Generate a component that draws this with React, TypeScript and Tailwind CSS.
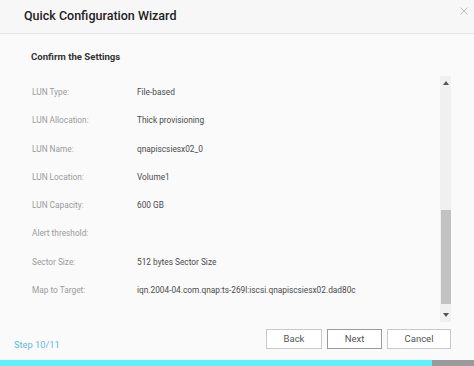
import React from "react";

const rows: [string, string][] = [
  ["LUN Type:", "File-based"],
  ["LUN Allocation:", "Thick provisioning"],
  ["LUN Name:", "qnapiscsiesx02_0"],
  ["LUN Location:", "Volume1"],
  ["LUN Capacity:", "600 GB"],
  ["Alert threshold:", ""],
  ["Sector Size:", "512 bytes Sector Size"],
  ["Map to Target:", "iqn.2004-04.com.qnap:ts-269l:iscsi.qnapiscsiesx02.dad80c"],
];

export default function App() {
  return (
    <div
      className="w-[474px] h-[366px] bg-[#fafafa] flex flex-col overflow-hidden"
      style={{ fontFamily: "Roboto, 'Noto Sans', sans-serif" }}
    >
      <div className="h-[34px] shrink-0 bg-[#f7f7f7] border-b border-[#e4e4e4] flex items-center pl-[24px] relative">
        <span className="text-[12.5px] font-medium text-[#222]">Quick Configuration Wizard</span>
        <svg className="absolute right-[6px] top-[7px]" width="8" height="8" viewBox="0 0 8 8">
          <path d="M0.5 0.5L7.5 7.5M7.5 0.5L0.5 7.5" stroke="#bdbdbd" strokeWidth="1" />
        </svg>
      </div>
      <div className="flex-1 flex flex-col">
        <div className="pl-[31px] pt-[16px] h-[42px] text-[9.6px] font-bold text-[#333]">Confirm the Settings</div>
        <div className="flex">
          <div className="flex-1 flex flex-col pt-[2px]">
            {rows.map(([l, v]) => (
              <div key={l} className="h-[28.3px] flex items-center text-[8.3px] pl-[32px]">
                <span className="w-[105px] text-[#9a9a9a]">{l}</span>
                <span className="text-[#4a4a4a] whitespace-nowrap">{v}</span>
              </div>
            ))}
          </div>
          <div className="w-[11px] mr-[23px] h-[246px] bg-[#f0f0f0] flex flex-col items-center">
            <svg width="6" height="4" viewBox="0 0 6 4" className="mt-[5px] shrink-0">
              <path d="M0 4L3 0L6 4Z" fill="#555" />
            </svg>
            <div className="mt-[125px] w-[10px] h-[94px] shrink-0 bg-[#c2c2c2]" />
            <svg width="6" height="4" viewBox="0 0 6 4" className="mt-[9px] shrink-0">
              <path d="M0 0L6 0L3 4Z" fill="#555" />
            </svg>
          </div>
        </div>
        <div className="flex items-start mt-[7px]">
          <span className="pl-[14px] text-[9.3px] text-[#62b6e0] flex-1 mt-[9px]">Step 10/11</span>
          <div className="flex gap-[5px] mr-[23px]">
            <button className="w-[56px] h-[20px] border border-[#c8c8c8] bg-white text-[9.5px] text-[#555]">Back</button>
            <button className="w-[55px] h-[20px] border border-[#9a9a9a] bg-white text-[9.5px] text-[#555]">Next</button>
            <button className="w-[64px] h-[20px] border border-[#c8c8c8] bg-white text-[9.5px] text-[#555]">Cancel</button>
          </div>
        </div>
      </div>
      <div className="h-[6px] shrink-0 flex">
        <div className="w-[432px] bg-[#5ef2f8]" />
        <div className="flex-1 bg-[#9a9a9a]" />
      </div>
    </div>
  );
}
